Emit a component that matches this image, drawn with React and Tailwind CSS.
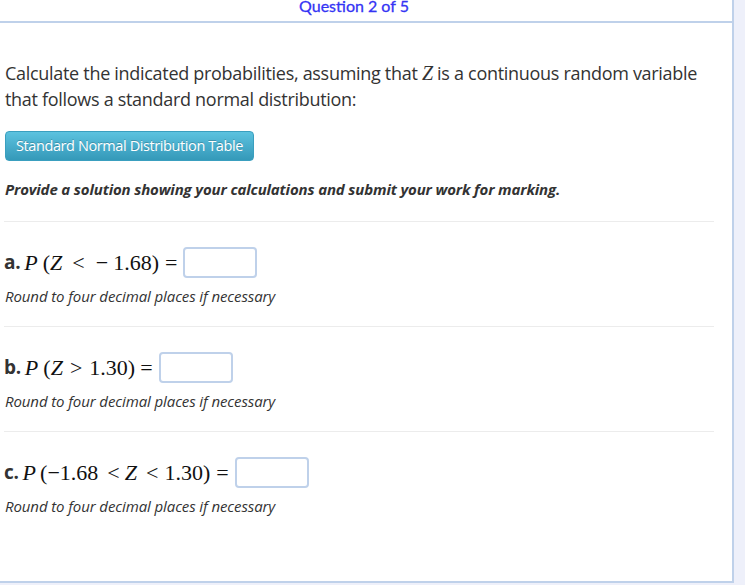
import React from 'react';

const mathFont = { fontFamily: '"Liberation Serif", "DejaVu Serif", serif' };

function MathRow({ label, children }) {
  return (
    <div className="flex items-center h-[31px]">
      <span className="font-bold text-[19px] tracking-[-0.3px] text-[#333] mr-[4px]">{label}</span>
      <span className="flex items-center text-[22px] leading-none text-[#111] whitespace-pre" style={mathFont}>
        {children}
      </span>
      <input
        type="text"
        className="h-[31px] w-[74px] ml-[6px] rounded-[4px] border-2 border-[#bfd1ea] bg-white outline-none"
      />
    </div>
  );
}

function Part({ label, children }) {
  return (
    <div className="border-t border-[#ececec] pt-[25px] pb-[20px]">
      <MathRow label={label}>{children}</MathRow>
      <p className="mt-[8px] text-[15px] tracking-[-0.1px] leading-[20px] italic text-[#333] pl-[1px]">
        Round to four decimal places if necessary
      </p>
    </div>
  );
}

export default function App() {
  return (
    <div className="flex bg-[#eef0fa] min-h-[585px]" style={{ fontFamily: '"Open Sans", sans-serif' }}>
      <div className="w-[734px] h-[583px] bg-white border-r-2 border-b-2 border-[#bfd1ea] flex flex-col">
        {/* header */}
        <div className="h-[23px] border-b-2 border-[#bfd1ea] flex justify-center">
          <span
            className="text-[16px] leading-[16px] -mt-[2px] mr-[24px] text-[#3434f4] [-webkit-text-stroke:0.3px_#3434f4]"
            style={{ fontFamily: 'Lato, sans-serif' }}
          >
            Question 2 of 5
          </span>
        </div>

        <div className="pl-[4px] w-[714px]">
          <p className="mt-[37px] text-[18px] tracking-[-0.3px] leading-[26px] text-[#333] pl-[1px]">
            Calculate the indicated probabilities, assuming that{' '}
            <span className="italic text-[20px] leading-none" style={mathFont}>Z</span> is a continuous random variable
            that follows a standard normal distribution:
          </p>

          <button className="mt-[19px] h-[30px] w-[249px] ml-[1px] rounded-[4px] border border-[#3a9fbf] bg-gradient-to-b from-[#5cc2df] to-[#3499b9] text-white text-[14.5px] tracking-[-0.4px] [text-shadow:0_-1px_0_rgba(0,0,0,0.2)]">
            Standard Normal Distribution Table
          </button>

          <p className="mt-[18px] text-[15px] tracking-[-0.15px] leading-[20px] font-bold italic text-[#333] pl-[1px] mb-[22px]">
            Provide a solution showing your calculations and submit your work for marking.
          </p>

          <Part label="a.">
            <span className="italic">P</span>
            <span className="ml-[5px]">(</span>
            <span className="italic">Z</span>
            <span className="ml-[10px]">&lt;</span>
            <span className="ml-[11px]">−</span>
            <span className="ml-[5px]">1.68</span>
            <span>)</span>
            <span className="ml-[6px]">=</span>
          </Part>

          <Part label="b.">
            <span className="italic">P</span>
            <span className="ml-[5px]">(</span>
            <span className="italic">Z</span>
            <span className="ml-[7px]">&gt;</span>
            <span className="ml-[7px]">1.30</span>
            <span>)</span>
            <span className="ml-[5px]">=</span>
          </Part>

          <Part label="c.">
            <span className="italic">P</span>
            <span className="ml-[4px]">(</span>
            <span>−1.68</span>
            <span className="ml-[9px]">&lt;</span>
            <span className="ml-[5px] italic">Z</span>
            <span className="ml-[9px]">&lt;</span>
            <span className="ml-[6px]">1.30</span>
            <span>)</span>
            <span className="ml-[6px]">=</span>
          </Part>
        </div>
      </div>
    </div>
  );
}
